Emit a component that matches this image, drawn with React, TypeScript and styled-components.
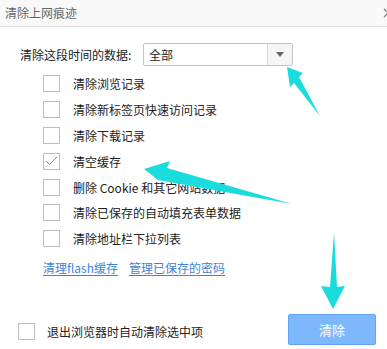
import React from 'react';
import styled, { createGlobalStyle } from 'styled-components';

const GlobalStyle = createGlobalStyle`
  html, body {
    margin: 0;
    padding: 0;
    background: #ffffff;
  }
  body {
    font-family: "Noto Sans CJK SC", "Noto Sans", "Liberation Sans", sans-serif;
    font-size: 12px;
    color: #333333;
  }
`;

const Dialog = styled.div`
  position: relative;
  width: 387px;
  height: 349px;
  overflow: hidden;
  display: flex;
  flex-direction: column;
  background: #ffffff;
`;

const TitleBar = styled.div`
  height: 27px;
  box-sizing: border-box;
  padding-left: 5px;
  background: #f9f9f9;
  border-bottom: 1px solid #dcdcdc;
  display: flex;
  align-items: center;
  justify-content: space-between;
`;

const Title = styled.span`
  font-size: 12px;
  color: #666666;
  line-height: 1;
`;

const CloseIcon = styled.svg`
  width: 10px;
  height: 10px;
  margin-right: -6px;
  flex-shrink: 0;
`;

const Body = styled.div`
  padding: 16px 0 0 20px;
  display: flex;
  flex-direction: column;
`;

const TimeRow = styled.div`
  display: flex;
  align-items: center;
  height: 23px;
`;

const Label = styled.span`
  width: 123px;
  color: #222222;
`;

const Select = styled.div`
  width: 150px;
  height: 23px;
  box-sizing: border-box;
  border: 1px solid #c4c4c8;
  border-radius: 2px;
  display: flex;
  align-items: stretch;
`;

const SelectValue = styled.span`
  flex: 1;
  padding-left: 5px;
  display: flex;
  align-items: center;
  color: #222222;
`;

const SelectArrow = styled.span`
  width: 24px;
  border-left: 1px solid #d8d8d8;
  background: #f5f5f5;
  display: flex;
  align-items: center;
  justify-content: center;
`;

const Triangle = styled.span`
  width: 0;
  height: 0;
  border-left: 4px solid transparent;
  border-right: 4px solid transparent;
  border-top: 5px solid #666666;
`;

const OptionList = styled.div`
  margin-top: 5px;
  padding-left: 23px;
  display: flex;
  flex-direction: column;
`;

const OptionRow = styled.label`
  height: 25.8px;
  display: flex;
  align-items: center;
  gap: 13px;
  color: #222222;
`;

const Box = styled.span<{ $checked?: boolean }>`
  width: 17px;
  height: 17px;
  box-sizing: border-box;
  border: 1px solid #bdbdbd;
  background: #ffffff;
  display: flex;
  align-items: center;
  justify-content: center;
  flex-shrink: 0;
`;

const Links = styled.div`
  margin-top: 3px;
  height: 26px;
  display: flex;
  align-items: center;
  gap: 11px;
`;

const Link = styled.a`
  color: #3f83d8;
  text-decoration: underline;
  text-underline-offset: 2px;
  cursor: pointer;
`;

const Footer = styled.div`
  margin-top: auto;
  padding: 0 11px 4px 18px;
  display: flex;
  align-items: center;
  justify-content: space-between;
`;

const AutoClear = styled.label`
  display: flex;
  align-items: center;
  gap: 12px;
  margin-top: 3px;
  color: #222222;
`;

const ClearButton = styled.button`
  width: 88px;
  height: 31px;
  box-sizing: border-box;
  border: 1px solid #5fa2f6;
  border-radius: 2px;
  background: #7db7fc;
  color: #ffffff;
  font-family: inherit;
  font-size: 13px;
  padding: 0;
`;

const Overlay = styled.svg`
  position: absolute;
  left: 0;
  top: 0;
  width: 387px;
  height: 349px;
  pointer-events: none;
`;

const options = [
  { text: '清除浏览记录', checked: false },
  { text: '清除新标签页快速访问记录', checked: false },
  { text: '清除下载记录', checked: false },
  { text: '清空缓存', checked: true },
  { text: '删除 Cookie 和其它网站数据', checked: false },
  { text: '清除已保存的自动填充表单数据', checked: false },
  { text: '清除地址栏下拉列表', checked: false },
];

const Check = () => (
  <svg width="13" height="10" viewBox="0 0 13 10">
    <path d="M1 5 L4.5 8.5 L12 1" fill="none" stroke="#4a90e2" strokeWidth="1" />
  </svg>
);

const App: React.FC = () => {
  return (
    <>
      <GlobalStyle />
      <Dialog>
        <TitleBar>
          <Title>清除上网痕迹</Title>
          <CloseIcon viewBox="0 0 10 10">
            <path d="M1 1 L9 9 M9 1 L1 9" stroke="#777" strokeWidth="1.2" />
          </CloseIcon>
        </TitleBar>

        <Body>
          <TimeRow>
            <Label>清除这段时间的数据:</Label>
            <Select>
              <SelectValue>全部</SelectValue>
              <SelectArrow>
                <Triangle />
              </SelectArrow>
            </Select>
          </TimeRow>

          <OptionList>
            {options.map((o) => (
              <OptionRow key={o.text}>
                <Box $checked={o.checked}>{o.checked && <Check />}</Box>
                {o.text}
              </OptionRow>
            ))}
            <Links>
              <Link>清理flash缓存</Link>
              <Link>管理已保存的密码</Link>
            </Links>
          </OptionList>
        </Body>

        <Footer>
          <AutoClear>
            <Box />
            退出浏览器时自动清除选中项
          </AutoClear>
          <ClearButton>清除</ClearButton>
        </Footer>

        {/* annotation arrows */}
        <Overlay viewBox="0 0 387 349">
          <polygon points="287,67 303,73 299,77 320,116 294,83 290,87" fill="#1bdcdc" />
          <polygon points="144,169 170,161 167,168 292,204 158,180" fill="#1bdcdc" />
          <polygon points="334,232 337,287 345,286 333,309 321,286 330,287" fill="#1bdcdc" />
        </Overlay>
      </Dialog>
    </>
  );
};

export default App;
